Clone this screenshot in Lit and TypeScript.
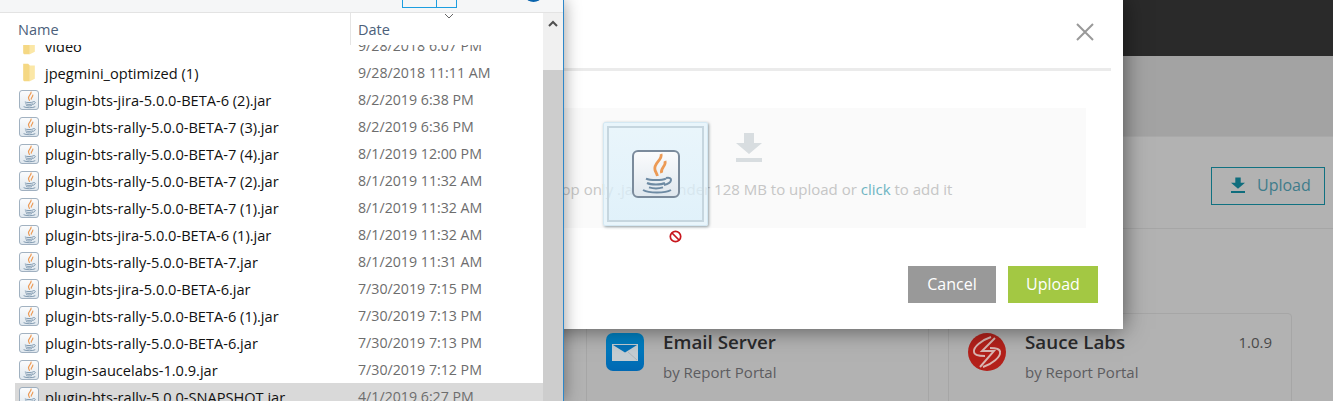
import { LitElement, html, css, svg } from "lit";
import { customElement } from "lit/decorators.js";

const files = [
  { name: "video", date: "9/28/2018 6:07 PM", folder: true },
  { name: "jpegmini_optimized (1)", date: "9/28/2018 11:11 AM", folder: true },
  { name: "plugin-bts-jira-5.0.0-BETA-6 (2).jar", date: "8/2/2019 6:38 PM" },
  { name: "plugin-bts-rally-5.0.0-BETA-7 (3).jar", date: "8/2/2019 6:36 PM" },
  { name: "plugin-bts-rally-5.0.0-BETA-7 (4).jar", date: "8/1/2019 12:00 PM" },
  { name: "plugin-bts-rally-5.0.0-BETA-7 (2).jar", date: "8/1/2019 11:32 AM" },
  { name: "plugin-bts-rally-5.0.0-BETA-7 (1).jar", date: "8/1/2019 11:32 AM" },
  { name: "plugin-bts-jira-5.0.0-BETA-6 (1).jar", date: "8/1/2019 11:32 AM" },
  { name: "plugin-bts-rally-5.0.0-BETA-7.jar", date: "8/1/2019 11:31 AM" },
  { name: "plugin-bts-jira-5.0.0-BETA-6.jar", date: "7/30/2019 7:15 PM" },
  { name: "plugin-bts-rally-5.0.0-BETA-6 (1).jar", date: "7/30/2019 7:13 PM" },
  { name: "plugin-bts-rally-5.0.0-BETA-6.jar", date: "7/30/2019 7:13 PM" },
  { name: "plugin-saucelabs-1.0.9.jar", date: "7/30/2019 7:12 PM" },
  { name: "plugin-bts-rally-5.0.0-SNAPSHOT.jar", date: "4/1/2019 6:27 PM", selected: true },
];

const javaMark = svg`
  <path d="M14.500 2c1 3-4 4.500-3 8 .3 1 1 2 1.200 3M16.500 5.500c.8 2.500-2.500 3.500-1.700 6" fill="none" stroke="#ec9a55" stroke-width="1.400"/>
  <path d="M7 14.300c2 1 8 1 10 0M7.500 16.500c2 1 7 1 9 0M8.500 18.700c2 .6 5 .6 7 0M5.500 20c3 1.700 11 1.700 14 0M17 14c3.500-.8 3.500 2.500-1 3.500" fill="none" stroke="#6d8aa3" stroke-width="1"/>`;

const fileIcon = html`<svg class="file-icon" viewBox="0 0 24 24">
  <defs><linearGradient id="jar" x1="0" y1="0" x2="0" y2="1"><stop offset="0" stop-color="#fbfcfd"/><stop offset="1" stop-color="#dfe7ee"/></linearGradient></defs>
  <rect x=".6" y=".6" width="22.800" height="22.800" rx="3" fill="url(#jar)" stroke="#8fa2b5"/>
  ${javaMark}
</svg>`;

const folderIcon = html`<svg class="file-icon" viewBox="0 0 24 24">
  <path d="M5 1h6l2 2v19H7c-1 0-2-1-2-2z" fill="#f5d884"/>
  <path d="M13 3h6v16l-6 3z" fill="#fbe7a6"/>
</svg>`;

const downloadIcon = html`<svg viewBox="0 0 26 30"><path d="M8 0h10v10h8L13 21 0 10h8zM0 25h26v4H0z" fill="currentColor"/></svg>`;

@customElement("app-root")
export class AppRoot extends LitElement {
  static styles = css`
    :host {
      display: block;
      position: relative;
      width: 1333px;
      height: 401px;
      overflow: hidden;
      background: #b2b2b2;
      font-family: "Open Sans", "Noto Sans", sans-serif;
    }

    /* page behind the modal */
    .topbar {
      height: 56px;
      background: #2a2a2a;
    }
    .subbar {
      height: 81px;
      background: #a3a3a3;
      border-bottom: 1px solid #a9a9a9;
      box-sizing: border-box;
    }
    .toolbar {
      height: 92px;
      box-sizing: border-box;
      border-bottom: 1px solid #a6a6a6;
      display: flex;
      justify-content: flex-end;
      padding: 30px 8px 0 0;
    }
    .page-upload {
      box-sizing: border-box;
      width: 114px;
      height: 38px;
      border: 1px solid #107181;
      color: #3f7c8b;
      font-size: 16px;
      display: flex;
      align-items: center;
      gap: 12px;
      padding: 0 0 2px 19px;
    }
    .page-upload svg {
      width: 14px;
      height: 17px;
      color: #0f6d7d;
    }
    .cards {
      display: grid;
      grid-template-columns: 343px 344px;
      gap: 19px;
      padding: 84px 0 0 586px;
    }
    .card {
      box-sizing: border-box;
      height: 120px;
      border: 1px solid #a6a6a6;
      border-radius: 4px;
      display: flex;
      gap: 19px;
      padding: 18px 19px 0 19px;
    }
    .card svg {
      width: 38px;
      height: 38px;
      flex: none;
      margin-top: 1px;
    }
    .card-body {
      flex: 1;
    }
    .card-title {
      font-size: 18.800px;
      font-weight: 600;
      line-height: 20px;
      color: #2a2a2c;
    }
    .card-by {
      font-size: 15px;
      line-height: 20px;
      margin-top: 10px;
      color: #5c5c60;
    }
    .card-version {
      font-size: 15px;
      color: #4a4a4a;
      line-height: 18px;
      margin-top: 1px;
    }

    /* modal, its left part lies under the explorer window */
    .modal {
      position: absolute;
      left: 374px;
      top: 0;
      width: 749px;
      height: 329px;
      background: #fff;
      box-shadow: 0 0 22px rgba(0, 0, 0, 0.55);
      display: flex;
      flex-direction: column;
    }
    .modal-head {
      flex: none;
      height: 71px;
      box-sizing: border-box;
      margin-right: 12px;
      border-bottom: 3px solid #ebebeb;
      display: flex;
      justify-content: flex-end;
      padding: 23px 17px 0 0;
    }
    .modal-head svg {
      width: 18px;
      height: 18px;
    }
    .dropzone {
      margin: 37px 37px 0;
      height: 120px;
      background: #fafafa;
      display: flex;
      flex-direction: column;
      align-items: center;
    }
    .dropzone svg {
      width: 26px;
      height: 30px;
      margin-top: 25px;
      color: #d8dde0;
    }
    .drop-text {
      margin-top: 16px;
      white-space: nowrap;
      font-size: 15px;
      line-height: 20px;
      color: #c6c6c6;
    }
    .drop-text span {
      color: #6fb5c2;
    }
    .modal-actions {
      display: flex;
      justify-content: flex-end;
      gap: 12px;
      padding: 38px 25px 0 0;
    }
    .btn {
      height: 37px;
      box-sizing: border-box;
      padding-bottom: 2px;
      color: #fff;
      font-size: 16px;
      display: flex;
      align-items: center;
      justify-content: center;
    }
    .btn.cancel {
      width: 88px;
      background: #999;
    }
    .btn.upload {
      width: 90px;
      background: #a3c843;
    }

    /* drag ghost, the drop text shows through it */
    .ghost {
      position: absolute;
      left: 603px;
      top: 122px;
      width: 105px;
      height: 104px;
      box-sizing: border-box;
      padding: 3px;
      border: 1px solid #d4e8f3;
      border-radius: 2px;
      background: rgba(226, 243, 251, 0.72);
      box-shadow: 1px 1px 3px rgba(60, 80, 90, 0.55);
    }
    .ghost-inner {
      width: 100%;
      height: 100%;
      box-sizing: border-box;
      border: 2px solid #c6d6df;
      background: linear-gradient(rgba(210, 235, 250, 0), rgba(200, 230, 248, 0.25));
      display: flex;
      align-items: center;
      justify-content: center;
    }
    .ghost-inner svg {
      width: 48px;
      height: 48px;
    }
    .no-drop {
      position: absolute;
      left: 669px;
      top: 230px;
      width: 13px;
      height: 13px;
    }

    /* file explorer window */
    .explorer {
      position: absolute;
      left: 0;
      top: 0;
      width: 564px;
      height: 401px;
      box-sizing: border-box;
      background: #fff;
      border-right: 1px solid #2d87c9;
      box-shadow: 0 0 16px rgba(0, 0, 0, 0.4);
      display: flex;
      flex-direction: column;
    }
    .ribbon {
      flex: none;
      height: 13px;
      box-sizing: border-box;
      background: #f5f6f7;
      border-bottom: 1px solid #e3e3e3;
      position: relative;
    }
    .ribbon-btn {
      position: absolute;
      top: -1px;
      height: 9px;
      box-sizing: border-box;
      border: 1px solid #1c9ee0;
    }
    .ribbon-dot {
      position: absolute;
      left: 526px;
      top: -8px;
      width: 15px;
      height: 10px;
      border-radius: 50%;
      background: #0a64ad;
    }
    .pane {
      flex: 1;
      min-height: 0;
      display: flex;
    }
    .listing {
      flex: 1;
      min-width: 0;
      display: flex;
      flex-direction: column;
    }
    .columns {
      flex: none;
      height: 32px;
      display: grid;
      grid-template-columns: 350px 1fr;
      font-size: 14.500px;
      color: #4c607a;
      position: relative;
      z-index: 1;
      background: #fff;
    }
    .columns div {
      padding: 7px 0 0 18px;
      line-height: 20px;
    }
    .columns div + div {
      border-left: 1px solid #e5e5e5;
      padding-left: 7px;
    }
    .chevron {
      position: absolute;
      left: 444px;
      top: 1px;
      width: 10px;
      height: 5px;
    }
    .rows {
      flex: 1;
      min-height: 0;
      overflow: hidden;
      padding-left: 15px;
    }
    .row {
      height: 27px;
      display: grid;
      grid-template-columns: 335px 1fr;
      align-items: center;
      font-size: 14.600px;
      color: #111;
    }
    .rows .row:first-child {
      margin-top: -13px;
    }
    .row.selected {
      background: #d9d9d9;
    }
    .row-name {
      display: flex;
      align-items: center;
      gap: 6px;
      padding-left: 4px;
      white-space: nowrap;
    }
    .row-date {
      padding-left: 8px;
      font-size: 14.200px;
      color: #6d6d6d;
      white-space: nowrap;
    }
    .file-icon {
      width: 20px;
      height: 20px;
      flex: none;
    }
    .scrollbar {
      flex: none;
      width: 20px;
      background: #f0f0f0;
      display: flex;
      flex-direction: column;
    }
    .scroll-arrow {
      height: 57px;
      display: flex;
      justify-content: center;
      padding-top: 7px;
      box-sizing: border-box;
    }
    .scroll-arrow svg {
      width: 10px;
      height: 7px;
    }
    .scroll-thumb {
      flex: 1;
      background: #cdcdcd;
    }
  `;

  private renderCard(icon: unknown, title: string, version = "") {
    return html`<div class="card">
      ${icon}
      <div class="card-body">
        <div class="card-title">${title}</div>
        <div class="card-by">by Report Portal</div>
      </div>
      ${version ? html`<div class="card-version">${version}</div>` : ""}
    </div>`;
  }

  render() {
    const emailIcon = html`<svg viewBox="0 0 38 38">
      <defs><linearGradient id="mail" x1="0" y1="0" x2="0" y2="1"><stop offset="0" stop-color="#0085c6"/><stop offset="1" stop-color="#0068b2"/></linearGradient></defs>
      <rect width="38" height="38" rx="7" fill="url(#mail)"/>
      <rect x="6" y="11" width="26" height="17" fill="#c4ccd1"/>
      <path d="M7 12h24L19 19.500z" fill="#0472b8"/>
      <path d="M22 19l9 8" stroke="#aeb5ba" stroke-width="1"/>
    </svg>`;
    const sauceIcon = html`<svg viewBox="0 0 38 38">
      <circle cx="19" cy="19" r="19" fill="#b3211b"/>
      <path d="M23 4C14 7 5 14 6 19c0 3 3 4 11 4M15 34c9-3 18-10 17-15 0-3-3-4-10-4M27 5L14 18h12L12 34" fill="none" stroke="#d9b6b2" stroke-width="1.900" stroke-linejoin="miter"/>
    </svg>`;

    return html`
      <div class="topbar"></div>
      <div class="subbar"></div>
      <div class="toolbar">
        <div class="page-upload">${downloadIcon}Upload</div>
      </div>
      <div class="cards">
        ${this.renderCard(emailIcon, "Email Server")}
        ${this.renderCard(sauceIcon, "Sauce Labs", "1.0.9")}
      </div>

      <div class="modal">
        <div class="modal-head">
          <svg viewBox="0 0 18 18"><path d="M1 1l16 16M17 1L1 17" stroke="#999" stroke-width="2"/></svg>
        </div>
        <div class="dropzone">
          ${downloadIcon}
          <div class="drop-text">Drop only .jar file under 128 MB to upload or <span>click</span> to add it</div>
        </div>
        <div class="modal-actions">
          <div class="btn cancel">Cancel</div>
          <div class="btn upload">Upload</div>
        </div>
      </div>

      <div class="ghost">
        <div class="ghost-inner">
          <svg viewBox="0 0 24 24">
            <rect x=".5" y=".5" width="23" height="23" rx="2.500" fill="url(#jar)" stroke="#7b8b9c"/>
            ${javaMark}
          </svg>
        </div>
      </div>
      <svg class="no-drop" viewBox="0 0 13 13">
        <circle cx="6.500" cy="6.500" r="5.200" fill="#fff" stroke="#c8161d" stroke-width="1.700"/>
        <path d="M3 3l7 7" stroke="#c8161d" stroke-width="1.700"/>
      </svg>

      <div class="explorer">
        <div class="ribbon">
          <div class="ribbon-btn" style="left:402px;width:35px"></div>
          <div class="ribbon-btn" style="left:436px;width:21px"></div>
          <div class="ribbon-dot"></div>
        </div>
        <div class="pane">
          <div class="listing">
            <div class="columns">
              <div>Name</div>
              <div>Date</div>
              <svg class="chevron" viewBox="0 0 10 5"><path d="M1 0l4 4 4-4" fill="none" stroke="#666"/></svg>
            </div>
            <div class="rows">
              ${files.map(
                (f) => html`<div class="row ${f.selected ? "selected" : ""}">
                  <div class="row-name">${f.folder ? folderIcon : fileIcon}<span>${f.name}</span></div>
                  <div class="row-date">${f.date}</div>
                </div>`
              )}
            </div>
          </div>
          <div class="scrollbar">
            <div class="scroll-arrow">
              <svg viewBox="0 0 10 7"><path d="M1 6l4-4 4 4" fill="none" stroke="#505050" stroke-width="2"/></svg>
            </div>
            <div class="scroll-thumb"></div>
          </div>
        </div>
      </div>
    `;
  }
}
